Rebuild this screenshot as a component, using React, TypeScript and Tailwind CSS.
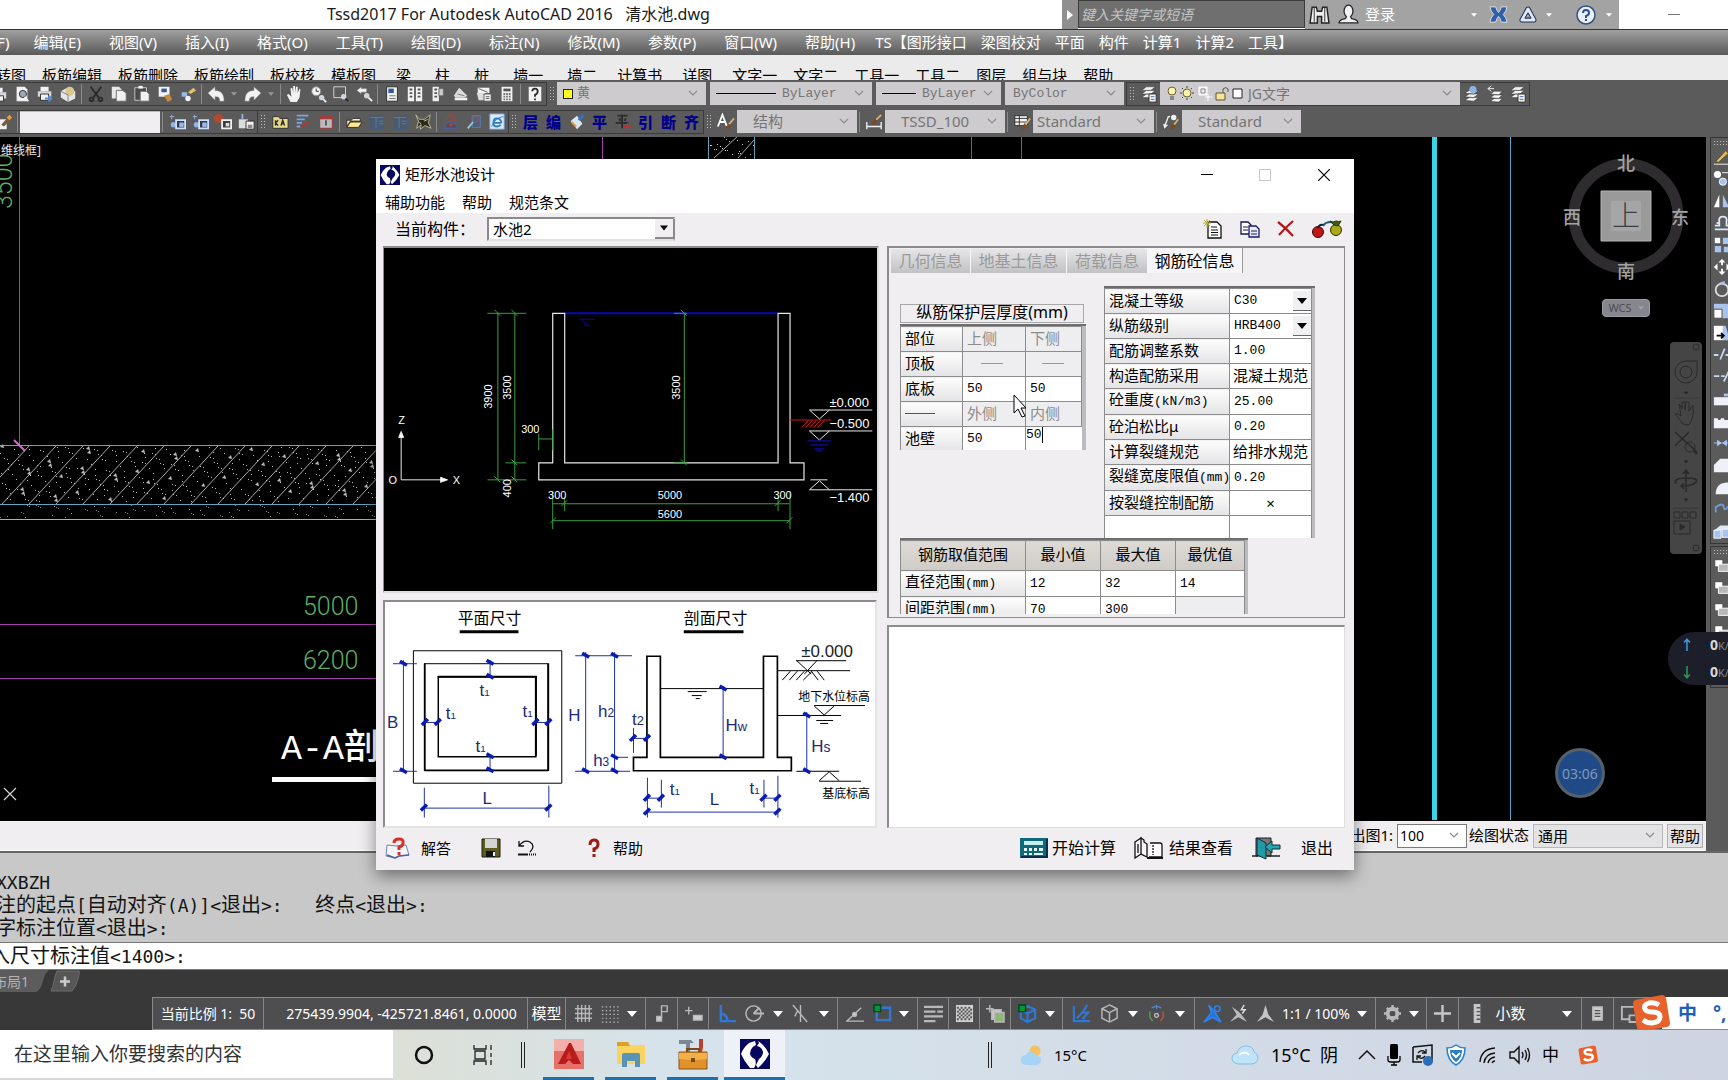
import React from 'react';

/* ---------- shared data ---------- */

const MENU_MAIN = ['编辑(E)', '视图(V)', '插入(I)', '格式(O)', '工具(T)', '绘图(D)', '标注(N)', '修改(M)', '参数(P)', '窗口(W)', '帮助(H)'];
const MENU_TS = ['TS【图形接口', '梁图校对', '平面', '构件', '计算1', '计算2', '工具】'];

const TSSD_GROUPS = [
    { gap: 'gap-4', items: ['转图', '板筋编辑', '板筋删除', '板筋绘制', '板校核', '模板图'] },
    { gap: 'gap-6', items: ['梁', '柱', '桩', '墙一', '墙二'] },
    { gap: 'gap-5', items: ['计算书', '详图', '文字一'] },
    { gap: 'gap-4', items: ['文字二', '工具一', '工具二', '图层', '组与块', '帮助'] },
];

const REBAR_ROWS = [
    { label: '混凝土等级', value: 'C30', kind: 'select' },
    { label: '纵筋级别', value: 'HRB400', kind: 'select' },
    { label: '配筋调整系数', value: '1.00', kind: 'input' },
    { label: '构造配筋采用', value: '混凝土规范', kind: 'cjk' },
    { label: '砼重度(kN/m3)', value: '25.00', kind: 'input' },
    { label: '砼泊松比μ', value: '0.20', kind: 'input' },
    { label: '计算裂缝规范', value: '给排水规范', kind: 'cjk' },
    { label: '裂缝宽度限值(mm)', value: '0.20', kind: 'input' },
    { label: '按裂缝控制配筋', value: '×', kind: 'mark' },
];

/* ---------- icons ---------- */

const W = '#f2f2f2';
const B = '#8fb4e6';
const D = '#2a2a2a';

const ICONS: Record<string, React.ReactNode> = {
    printer: <><path d="M5 8V3h9v5" fill={W} /><path d="M2 8h16v7H2z" fill="#d5d8de" /><path d="M5 12h10v6H5z" fill={W} stroke={D} strokeWidth="1" /></>,
    preview: <><path d="M4 2h9l3 3v13H4z" fill={W} /><circle cx="11" cy="10" r="4" fill="#9aa7b8" stroke={D} /><path d="m13 13 4 5" stroke={W} strokeWidth="2" /></>,
    plot: <><path d="M5 7V2h9v5" fill={W} /><path d="M2 7h15v6H2z" fill="#d5d8de" /><path d="M5 10h9v7H5z" fill={W} stroke={D} /><path d="M10 15h7m-3-3 3 3-3 3" stroke="#5c8fd6" strokeWidth="2" fill="none" /></>,
    box: <><path d="m2 7 7-4 9 4v8l-8 4-8-5z" fill="#e6e6e6" /><circle cx="12" cy="7" r="5" fill="#d9c78c" /><path d="m2 7 8 4v8" stroke="#777" fill="none" /></>,
    cut: <><path d="M4 2l9 12M16 2 7 14" stroke={D} strokeWidth="2" /><circle cx="5" cy="16" r="2" fill="none" stroke={D} strokeWidth="2" /><circle cx="15" cy="16" r="2" fill="none" stroke={D} strokeWidth="2" /></>,
    copy: <><path d="M2 2h8l3 3v10H2z" fill="#e8e8e8" /><path d="M7 6h7l4 3v9H7z" fill={W} stroke="#666" /></>,
    paste: <><path d="M2 3h13v14H2z" fill="#4a4a4a" stroke="#ccc" /><path d="M6 1h5v3H6z" fill={W} /><path d="M8 7h7l3 3v8H8z" fill={W} stroke="#666" /></>,
    match: <><path d="M3 2h12v11H3z" fill={W} /><path d="M6 4h6v4H6z" fill="#35599a" /><path d="m9 12 6-2 3 6-5 3z" fill="#c88a3c" /></>,
    brush: <><path d="M3 8h6v5H3z" fill="#9ab7e8" /><circle cx="10" cy="15" r="3" fill={W} /><path d="m10 8 6-5 3 3-6 4z" fill="#e2bf60" /></>,
    undo: <path d="M1 9l8-7v4c7 0 10 4 10 12h-5c0-4-1-5-5-5v4z" fill={W} stroke="#777" strokeWidth=".5" />,
    redo: <path d="M19 9l-8-7v4C4 6 1 10 1 18h5c0-4 1-5 5-5v4z" fill={W} stroke="#777" strokeWidth=".5" />,
    hand: <path d="M5 19 1 11l2-1 3 3-1-9 2-1 1 6V1h2v8l1-7h2v7l2-5 1 1-1 9-3 5z" fill={W} />,
    zoomrt: <><circle cx="8" cy="7" r="5" fill={W} stroke="#888" /><path d="M8 4v3h3" stroke={D} fill="none" /><circle cx="14" cy="14" r="3" fill="#cfd6df" /><path d="m16 16 3 3" stroke={W} strokeWidth="2" /></>,
    zoomwin: <><path d="M2 2h13v12H2z" fill="none" stroke="#ddd" /><circle cx="13" cy="13" r="3" fill="#cfd6df" /><path d="m15 15 3 3" stroke={D} strokeWidth="2" /></>,
    zoomprev: <><path d="m2 6 5-4v2h6v4H7v2z" fill={W} stroke="#666" strokeWidth=".5" /><circle cx="13" cy="12" r="3" fill="#cfd6df" /><path d="m15 14 4 4" stroke={W} strokeWidth="2" /></>,
    props: <><path d="M4 2h12v16H4z" fill={W} stroke={D} /><path d="M6 4h6v5H6z" fill="#35599a" /><path d="M7 12h7M7 15h7" stroke="#666" /></>,
    design: <><path d="M2 2h7v16H2zM11 2h7v16h-7z" fill={W} /><path d="M4 5h3M4 9h3M4 13h3M13 5h3M13 9h3M13 13h3" stroke="#555" strokeWidth="2" /></>,
    palettes: <><path d="M4 2h7v16H4z" fill={W} /><path d="M11 4h5v8h-5z" fill="#ccc" stroke="#666" /><path d="M6 5h3M6 9h3M6 13h3" stroke="#555" strokeWidth="2" /></>,
    sheet: <><path d="m2 12 6-9 9 9-3 2H4z" fill="#ddd" /><path d="M3 14h14v3H3z" fill={W} /><path d="m6 10 8 2" stroke="#777" /></>,
    markup: <><path d="M3 3h13v6H3z" fill={W} /><path d="M2 9h9v8H4z" fill="#ddd" /><path d="M10 10h8v8h-8z" fill={W} stroke="#555" /><path d="m4 4 10 4M12 13h4M12 15h4" stroke="#555" /></>,
    calc: <><path d="M4 2h12v16H4z" fill={W} /><path d="M6 4h8v3H6z" fill="#555" /><path d="M6 10h8M6 13h8M6 16h8" stroke="#777" strokeDasharray="2 1" strokeWidth="2" /></>,
    help: <><path d="M3 2h14v16H3z" fill={W} /><path d="M7 7q0-3 3-3t3 3-3 4v2M10 15v2" stroke={D} strokeWidth="2" fill="none" /></>,
    layerset: <><path d="m2 9 5-3h10l-5 4zM2 13l5-3h10l-5 4zM2 17l5-3h10l-5 4z" fill={W} stroke={D} strokeWidth=".5" /><circle cx="11" cy="5" r="4" fill={B} /></>,
    layerprev: <><path d="m5 10 4-3h9l-4 4zM5 14l4-3h9l-4 4zM5 18l4-3h9l-4 4z" fill={W} stroke={D} strokeWidth=".5" /><path d="m6 1-4 3 4 3M2 4h7" stroke={W} fill="none" /></>,
    layerdoc: <><path d="m2 6 5-4h10l-5 4zM2 10l5-4h10l-5 4zM2 14l5-4h6l-3 4z" fill={W} stroke={D} strokeWidth=".5" /><path d="M10 10h8v9h-8z" fill={W} stroke={D} /><path d="M12 13h4M12 16h4" stroke="#3b62a8" /></>,
    blockadd: <><circle cx="6" cy="13" r="3" fill={B} /><path d="M9 8h10v9H9z" fill="#3b3b3b" stroke="#cfe0ff" strokeWidth="2" /><path d="M13 11h4v4h-4zM4 2v5M2 4h5" stroke={B} fill="#9bbcf0" /></>,
    blockred: <><circle cx="5" cy="6" r="5" fill="#b5482c" /><path d="M9 8h10v9H9z" fill="#3b3b3b" stroke={W} strokeWidth="2" /><path d="M13 11h4v4h-4z" fill="#ddd" /></>,
    blocksave: <><path d="M2 7h10v10H2z" fill="#ddd" /><path d="M10 9h9v9h-9z" fill={W} stroke={D} /><path d="M12 13h5v4h-5z" fill="#888" /><path d="M6 1v6" stroke={B} strokeWidth="2" /></>,
    folderk: <><path d="M2 4h6l2 2h9v11H2z" fill="#e9d98d" stroke={D} /><path d="M5 8v6M5 11l3-3M5 11l3 3M11 14l2-6 2 6M11 12h4" stroke={D} fill="none" strokeWidth="1.5" /></>,
    textmark: <><path d="M3 3h13M3 7h9M3 11h6M3 15h4" stroke="#7fa5df" strokeWidth="2" /><path d="m8 16 9-6" stroke="#b33" strokeWidth="2" /></>,
    stamp: <><path d="M3 3h14v14H3z" fill="#bbb" stroke="#933" /><path d="M3 3h14v4H3z" fill="#a43c3c" /><path d="M10 8v6" stroke="#555" strokeWidth="2" /></>,
    open: <><path d="M2 8h5l2-2h8v3H6l-4 6z" fill="#fff3b0" stroke={D} /><path d="M6 10h13l-4 6H2z" fill="#ffe894" stroke={D} /></>,
    winblue: <><path d="M3 3h14v14H3z" fill="#4e5a68" stroke="#39618f" /><path d="M3 5h14M9 5v12M12 9h5M12 12h5" stroke="#4f82bd" /></>,
    cat: <path d="M2 2l4 5h6l6-5-2 9 3 6-7-3-5 4 1-5-5 4 2-8zM5 10l3 2M11 9l5-2" fill="#2b2b1d" stroke="#cbbf96" />,
    person: <><circle cx="10" cy="6" r="4" fill="none" stroke="#9a4444" strokeWidth="2" /><path d="M3 17q1-8 7-7t7 7z" fill="#5a4a55" stroke="#4c5f96" strokeWidth="1.5" /><path d="M8 13h4M10 11v4" stroke="#c44" /></>,
    wrench: <><path d="M8 3h9v13H8z" fill="#4f5f7a" stroke="#5c7fb8" /><circle cx="12" cy="7" r="3" fill="none" stroke="#b45252" /><path d="m9 10-6 7" stroke="#9cc" strokeWidth="2" /></>,
    ie: <><path d="M2 1h16v17H2z" fill="#dbe9f8" stroke="#6aa3da" /><path d="M15 11H6q0-5 4-5t5 5M6 11q0 4 4 4 3 0 4-2" fill="none" stroke="#2c7cc4" strokeWidth="2" /><path d="M4 15Q8 5 17 4" stroke="#2c7cc4" fill="none" strokeWidth="1" /></>,
    spray: <><path d="m3 9 7-6 6 9-6 6z" fill="#d9e6f5" /><path d="m12 8 5-6" stroke="#2f74c8" strokeWidth="3" /><path d="M4 10l5 5" stroke="#e8a030" strokeWidth="2" /></>,
    handtool: <><path d="M4 3h11M6 6l1 3M13 6l-1 3M2 11h14M9 3v14" stroke={D} strokeWidth="2" /><path d="M11 15h8M15 11v8" stroke="#b33" strokeWidth="1.5" /></>,
    textstyle: <><path d="M1 15 6 2l5 13M3 10h7" stroke="#fff" strokeWidth="2" fill="none" /><path d="m19 6-7 8" stroke="#d8b070" strokeWidth="2" /><path d="m9 16 4-4 3 2-3 4z" fill="#7a4a2a" /></>,
    dimstyle: <><path d="M2 10v8M18 10v8M2 15h16" stroke={W} strokeWidth="1.5" /><path d="m18 2-6 6" stroke="#d8b070" strokeWidth="2" /><path d="m7 12 4-6 3 3-3 4z" fill="#7a4a2a" /></>,
    tablestyle: <><path d="M2 3h14v11H2z" fill={W} stroke={D} /><path d="M2 6h14M2 10h14M7 3v11" stroke={D} /><path d="m9 17 4-6 3 3-3 4z" fill="#7a4a2a" /><path d="m19 6-5 7" stroke="#d8b070" strokeWidth="2" /></>,
    leader: <><path d="M9 4H7L3 15m-1-3 1 4 3-3" stroke={W} fill="none" strokeWidth="1.5" /><circle cx="13" cy="5" r="3" fill={W} /><path d="m18 7-6 8" stroke="#d8b070" strokeWidth="2" /><path d="m9 17 3-5 3 2-2 4z" fill="#7a4a2a" /></>,
    note: <><path d="M1 7h12v11H1z" fill={W} /><path d="m7 13 7-8 3 3-7 7z" fill="#7a5a3a" /><path d="m13 5 3-3 3 3-3 3z" fill="#e2a040" /></>,
};

const Ico: React.FC<{ name: string; className?: string }> = ({ name, className = 'size-[18px]' }) => (
    <svg viewBox="0 0 20 20" className={`${className} shrink-0`} fill="none" aria-hidden="true">{ICONS[name]}</svg>
);

const TssdLogo: React.FC<{ className: string }> = ({ className }) => (
    <svg viewBox="0 0 30 30" className={className} aria-hidden="true">
        <path d="M0 0h30v30H0z" fill="#06065c" />
        <path d="M15 2 9 4Q3 9 1 15q3 7 9 14h4q3-4 1-9-5-2-5-6 1-6 6-8z" fill="#fff" />
        <path d="M18 2q3 2 5 4 4 4 6 9-4 8-11 14l-2-3 3-6q4-3 4-7-1-5-6-6l2-3z" fill="#fff" />
    </svg>
);

const Down: React.FC<{ className?: string }> = ({ className = 'w-2.5 h-1.5 text-white' }) => (
    <svg viewBox="0 0 10 6" className={`${className} shrink-0`} aria-hidden="true"><path d="M0 0h10L5 6z" fill="currentColor" /></svg>
);

const Chevron = () => (
    <svg viewBox="0 0 10 6" className="absolute right-2 top-1/2 -mt-1 w-2.5 h-1.5 pointer-events-none" fill="none" aria-hidden="true">
        <path d="m1 1 4 4 4-4" stroke="#8c8c8c" strokeWidth="1.2" />
    </svg>
);

/* Half-width latin next to full-width hanzi, as the old bitmap face sets it */
const Mixed: React.FC<{ text: string }> = ({ text }) => (
    <>
        {text.split(/([\x21-\x7e]+)/).map((part, i) =>
            i % 2 ? <span key={i} className="font-['Liberation_Mono','Noto_Sans_CJK_SC',monospace] text-[13px]">{part}</span> : part
        )}
    </>
);

/* ---------- top bars ---------- */

const TitleBar = () => (
    <header className="h-[29px] flex items-stretch bg-white shrink-0">
        <h1 className="pl-[327px] text-base leading-[29px] text-[#1a1a1a] whitespace-pre">Tssd2017 For Autodesk AutoCAD 2016   清水池.dwg</h1>
        <div className="ml-auto flex items-stretch">
            <button className="w-4 bg-[#8f8f8f] flex items-center justify-center" aria-label="展开搜索">
                <svg viewBox="0 0 6 10" className="w-1.5 h-2.5"><path d="M0 0l6 5-6 5z" fill="#fff" /></svg>
            </button>
            <input aria-label="搜索帮助" placeholder="键入关键字或短语" className="w-[227px] h-[28px] px-0.5 bg-[#6f6f6f] border border-[#3c3c3c] text-[14px] italic text-white placeholder:text-[#c4c4c4] outline-none" />
            <div className="w-[314px] flex items-center bg-[#a3a3a3] text-white">
                <svg viewBox="0 0 20 20" className="ml-1 size-[21px]"><path d="M3 3h4l1 4h4l1-4h4l2 15h-7v-6H8v6H1z" fill="#eee" stroke="#222" strokeWidth="1.4" /><path d="M5 3v14M15 3v14" stroke="#444" /></svg>
                <button className="ml-2 flex items-center gap-1.5 text-[15px]">
                    <svg viewBox="0 0 20 20" className="size-[21px]"><path d="M1 18q0-3 6-4l1-2Q5 9 6 5q1-4 4-4t4 4q1 4-2 7l1 2q6 1 6 4z" fill="#eef0f4" stroke="#222" strokeWidth="1.2" /></svg>
                    登录
                </button>
                <Down className="ml-[76px] w-1.5 h-1 text-white" />
                <svg viewBox="0 0 20 20" className="ml-3 size-[19px]"><path d="M1 2h6q1 4 3 6 2-2 3-6h6q-1 5-4 8 3 3 4 8h-6q-1-4-3-6-2 2-3 6H1q1-5 4-8-3-3-4-8z" fill="#2f5fa8" stroke="#fff" strokeWidth=".7" /></svg>
                <svg viewBox="0 0 20 20" className="ml-2.5 size-5" fill="none"><path d="M10 4 4 15h12z" stroke="#1f2f52" strokeWidth="5" strokeLinejoin="round" /><path d="M10 4 4 15h12z" stroke="#dfe8f7" strokeWidth="3" strokeLinejoin="round" /><path d="m10 8-3 5h6z" fill="#a3a3a3" stroke="#26365c" /></svg>
                <Down className="ml-2 w-1.5 h-1 text-white" />
                <svg viewBox="0 0 20 20" className="ml-6 size-5" fill="none"><circle cx="10" cy="10" r="9" fill="#e9effb" stroke="#34507f" strokeWidth="1.5" /><path d="M7 8q0-3 3-3t3 3q0 2-3 3v2M10 14v2" stroke="#27508f" strokeWidth="2" /></svg>
                <Down className="ml-2.5 w-1.5 h-1 text-white" />
            </div>
            <button className="w-[109px] flex items-center justify-center bg-white" aria-label="最小化"><span className="w-3 h-px bg-[#777]" /></button>
        </div>
    </header>
);

const MenuBar = () => (
    <nav className="h-[26px] shrink-0 flex items-center border-t border-[#333] bg-linear-to-b from-[#a0a0a0] to-[#5a5a5a] text-[15px] text-white whitespace-nowrap overflow-hidden">
        <button className="-ml-[3px]">F)</button>
        <div className="flex ml-6 gap-7">
            {MENU_MAIN.map((m) => <button key={m}>{m}</button>)}
        </div>
        <div className="flex ml-5 gap-3.5">
            {MENU_TS.map((m) => <button key={m}>{m}</button>)}
        </div>
    </nav>
);

const TssdBar = () => (
    <nav className="h-[25px] shrink-0 pt-3 bg-[#ebebeb] text-[15px] leading-4 text-black whitespace-nowrap overflow-hidden flex">
        {TSSD_GROUPS.map((g, i) => (
            <div key={i} className={`flex ${g.gap} ${i === 0 ? '-ml-1' : i === 3 ? 'ml-4' : 'ml-5'}`}>
                {g.items.map((t) => <button key={t} className="h-4">{t}</button>)}
            </div>
        ))}
    </nav>
);

const Sep = () => <span className="w-px h-5 mx-0.5 bg-[#8a8a8a] shrink-0" />;
const Grip = () => <span className="w-1.5 h-4 mx-0.5 shrink-0 bg-[radial-gradient(#c0c0c0_1px,transparent_1px)] bg-size-[3px_3px]" />;

const Icons: React.FC<{ names: string[] }> = ({ names }) => (
    <>
        {names.map((n, i) => (
            <button key={i} className="w-[23px] h-5 flex items-center justify-center shrink-0" aria-label={n}><Ico name={n} /></button>
        ))}
    </>
);

const BarSelect: React.FC<{ label: string; value: string; className: string; children?: React.ReactNode }> = ({ label, value, className, children }) => (
    <div className={`relative h-[23px] flex items-center bg-[#cdcbcd] shrink-0 ${className}`}>
        {children}
        <select aria-label={label} className="flex-1 min-w-0 h-full bg-transparent appearance-none outline-none text-[#757575]"><option>{value}</option></select>
        <Chevron />
    </div>
);

const ToolbarRows = () => (
    <div className="h-[57px] shrink-0 bg-[#5b5b5b] overflow-hidden">
        <div className="h-[27px] flex items-center">
            <div className="flex items-center h-6 border border-[#3a3a3a] border-l-0 -ml-[13px]">
                <Icons names={['printer', 'preview', 'plot', 'box']} /><Sep />
                <Icons names={['cut', 'copy', 'paste', 'match', 'brush']} /><Sep />
                <Icons names={['undo']} /><Down className="mx-1 w-1.5 h-1 text-[#999]" />
                <Icons names={['redo']} /><Down className="mx-1 w-1.5 h-1 text-[#999]" /><Sep />
                <Icons names={['hand', 'zoomrt', 'zoomwin', 'zoomprev']} /><Sep />
                <Icons names={['props', 'design', 'palettes', 'sheet', 'markup', 'calc']} /><Sep />
                <Icons names={['help']} />
            </div>
            <div className="flex items-center gap-1 text-[13px] font-['Liberation_Mono','Noto_Sans_CJK_SC',monospace]">
                <div className="flex items-center">
                    <Grip />
                    <BarSelect label="颜色" value="黄" className="w-[149px] pl-1.5 gap-1"><span className="size-2.5 border border-[#222] bg-[#ffff20]" /></BarSelect>
                </div>
                <BarSelect label="线型" value="ByLayer" className="w-[162px] pl-1.5 gap-1.5"><span className="w-[60px] h-px bg-black" /></BarSelect>
                <BarSelect label="线宽" value="ByLayer" className="w-[125px] pl-1.5 gap-1.5"><span className="w-[34px] h-px bg-black" /></BarSelect>
                <BarSelect label="打印样式" value="ByColor" className="w-[119px] pl-2" />
            </div>
            <div className="flex items-center h-6 ml-0.5 border border-[#3a3a3a]">
                <Grip />
                <Icons names={['layerdoc']} />
                <BarSelect label="图层" value="JG文字" className="w-[300px] pl-1.5 gap-1 text-[14px]">
                    <svg viewBox="0 0 78 20" className="w-[78px] h-5 shrink-0" fill="none">
                        <circle cx="6" cy="7" r="4" fill="#fbf3a8" stroke="#6c6232" /><path d="M4 12h4v4H4z" fill="#888" />
                        <circle cx="21" cy="9" r="4" fill="#fbf3a8" stroke="#6c6232" /><path d="M21 2v2M21 14v2M14 9h2M26 9h2M16 4l1 1M25 13l1 1M26 4l-1 1M17 13l-1 1" stroke="#444" />
                        <path d="M33 3h8v8h-8z" fill="#eee" stroke="#fff" /><path d="M35 5h4v4h-4z" stroke="#888" /><path d="M39 13h7M42 10v7" stroke="#fff" />
                        <path d="M50 9h9v7h-9z" fill="#f4e6a0" stroke="#5d5228" /><path d="M57 9V5q3-3 5 0v3" stroke="#555" /><path d="M67 5h9v9h-9z" fill="#fff" stroke="#222" />
                    </svg>
                </BarSelect>
                <Icons names={['layerset', 'layerprev', 'layerdoc']} />
            </div>
        </div>
        <div className="h-[29px] flex items-center">
            <div className="flex items-center h-6 border border-[#3a3a3a] border-l-0 -ml-2">
                <Icons names={['note']} /><Sep />
                <input aria-label="块名称" className="w-[140px] h-[22px] bg-[#f0eef0] border-t border-[#bbb] outline-none" /><Sep />
                <Icons names={['blockadd', 'blockadd', 'blockred', 'blocksave']} />
            </div>
            <div className="flex items-center h-6 border border-[#3a3a3a] border-l-0">
                <Grip />
                <Icons names={['folderk', 'textmark', 'stamp']} /><Sep />
                <Icons names={['open', 'winblue', 'winblue', 'cat']} /><Sep />
                <Icons names={['person', 'wrench', 'ie']} />
            </div>
            <div className="flex items-center h-6 border border-[#3a3a3a] border-l-0 text-[#00008c] text-[15px] font-black">
                <Grip />
                {['层', '编'].map((t) => <button key={t} className="w-[23px] leading-5">{t}</button>)}
                <Icons names={['spray']} />
                <button className="w-[23px] leading-5">平</button>
                <Icons names={['handtool']} />
                {['引', '断', '齐'].map((t) => <button key={t} className="w-[23px] leading-5">{t}</button>)}
            </div>
            <div className="flex items-center text-[15px]">
                <Grip />
                <Icons names={['textstyle']} />
                <BarSelect label="文字样式" value="结构" className="w-[120px] pl-4" />
                <Sep /><Icons names={['dimstyle']} />
                <BarSelect label="标注样式" value="TSSD_100" className="w-[120px] pl-4" />
                <Sep /><Icons names={['tablestyle']} />
                <BarSelect label="表格样式" value="Standard" className="w-[121px] pl-1" />
                <Sep /><Icons names={['leader']} />
                <BarSelect label="引线样式" value="Standard" className="w-[119px] pl-4" />
            </div>
        </div>
    </div>
);

/* ---------- drawing area ---------- */

const speckles = Array.from({ length: 420 }, (_, i) => ({
    x: (i * 73 + (i % 7) * 31) % 376,
    y: 311 + ((i * 37 + (i % 11) * 5) % 55),
    big: i % 9 === 0,
}));

const ModelSpace = () => (
    <svg width="1706" height="683" viewBox="0 1 1706 683" className="absolute left-0 top-0" fill="none" aria-label="模型空间">
        <g stroke="#a83fb0">
            <path d="M19.5 0v309M0 309.5h28M0 488.5h376M0 542.5h376M602.5 0v40M971.5 0v40M1021.5 0v40" />
            <path d="m14 304 11 11" stroke="#e060e8" strokeWidth="2" />
        </g>
        <g stroke="#a8a8a8">
            {Array.from({ length: 16 }, (_, i) => <path key={i} d={`M${-25 + i * 27} 368l54-58`} />)}
            <path d="m714 22 24-22M738 22l16-18" />
        </g>
        {speckles.map((s, i) => <path key={i} d={s.big ? `M${s.x} ${s.y}l3-3 1 4z` : `M${s.x} ${s.y}h1v1h-1z`} fill="#bdbdbd" />)}
        {speckles.slice(0, 90).map((s, i) => <path key={i} d={`M${s.x} ${369 + (s.y % 13)}h1v1h-1z`} fill="#8a8a8a" />)}
        {speckles.slice(0, 24).map((s, i) => <path key={i} d={`M${710 + (s.x % 44)} ${(s.y * 3) % 22}h1v1h-1z`} fill="#ccc" />)}
        <g stroke="#62a5c4"><path d="M0 309.5h376M0 368.5h376M708.5 0v40M754.5 0v40" /><path d="M0 383.5h376" stroke="#8fb7e0" /></g>
        <path d="M1434.5 0v684" stroke="#3bd3e5" strokeWidth="5" />
        <path d="M1510.5 0v684" stroke="#58a4cc" />
        <g fill="#5fae63" className="font-['Roboto',sans-serif] text-[25px] font-light">
            <text x="303" y="479">5000</text>
            <text x="303" y="533">6200</text>
            <text transform="translate(12 73) rotate(-90)">3500</text>
        </g>
        <text x="1" y="19" fill="#e8e8e8" className="text-[12px]">维线框]</text>
        <text x="281" y="623" fill="#fff" className="font-['Liberation_Mono','Noto_Sans_CJK_SC',monospace] text-[35px] font-medium">A-A剖</text>
        <path d="M272 643.5h104" stroke="#fff" strokeWidth="5" />
        <path d="m4 652 12 12M16 652 4 664" stroke="#d0d0d0" strokeWidth="1.3" />
    </svg>
);

const ViewCube = () => (
    <div className="absolute right-[16px] top-[16px] w-[128px]">
        <svg viewBox="0 0 128 128" className="w-full" fill="none">
            <circle cx="64" cy="63" r="52" stroke="#2e2c2e" strokeWidth="11" />
            <path d="M39 38h50v50H39z" fill="#9a9a9a" stroke="#b4b4b4" /><path d="M49 48h30v30H49z" fill="#a6a6a8" />
            <g fill="#a2a2a2" textAnchor="middle" className="text-[18px] font-medium">
                <text x="64" y="17">北</text><text x="64" y="125">南</text><text x="10" y="71">西</text><text x="118" y="71">东</text>
            </g>
            <text x="64" y="73" textAnchor="middle" fill="#3c3c44" className="text-[28px] font-light">上</text>
        </svg>
        <button className="mt-[18px] mx-auto w-12 h-[18px] rounded bg-[#86868e] border border-[#9c9ca4] text-[11px] leading-4 text-[#4c4c54] flex items-center justify-center gap-1.5">WCS<Down className="w-1.5 h-1 text-[#a0a0a8]" /></button>
    </div>
);

const NavBar = () => (
    <div className="absolute right-1 top-[205px] w-8 h-[212px] rounded bg-[#454545]">
        <svg viewBox="0 0 32 212" className="w-full h-full" fill="none" stroke="#2a2a2a">
            <circle cx="26" cy="5" r="3" /><circle cx="26" cy="206" r="3" />
            <circle cx="16" cy="30" r="6" /><path d="M16 19h11v11a11 11 0 1 1-11-11z" /><path d="M3 56h26M3 166h26" stroke="#383838" />
            <path d="M13 82q-3-4-8-10 3-1 6 2L9 62l3 5V60h3v8l1-8h3v9l4-6q1 8-1 14l-3 6z" />
            <path d="m5 90 22 20M19 90 5 104" strokeWidth="1.5" /><circle cx="20" cy="105" r="5" /><path d="m24 109 3 3" strokeWidth="2" />
            <path d="M16 128v22M13 132l3-4 3 4M6 142q-3-6 10-6t10 4-14 4m2-3-3 3 3 3" strokeWidth="1.5" />
            <path d="M4 170h6v6H4zM12 170h6v6h-6zM20 170h6v6h-6zM4 179h16v13H4z" /><path d="m10 182 5 3-5 3z" fill="#2a2a2a" />
            <path d="M14 50h4l-2 2zM14 119h4l-2 2zM14 157h4l-2 2z" fill="#222" />
        </svg>
    </div>
);

const SIDE: React.ReactNode[] = [
    <><path d="m3 15 11-12 3 3L6 16z" fill="#e3b95c" stroke="#553" /><path d="M1 18h16" stroke="#fff" /></>,
    <><circle cx="5" cy="5" r="4" fill="#fff" /><circle cx="11" cy="13" r="4" fill="#a9c3ec" stroke="#fff" /><path d="M10 3h8v6" stroke="#fff" /></>,
    <><path d="M7 3v14H1z" fill="#fff" /><path d="M11 3v14h7z" fill="#a9c3ec" /></>,
    <path d="M2 13h5V8q-1-5 4-5t4 5v5h4M2 17h18M4 10h2" stroke="#dce6f5" strokeWidth="2" />,
    <><path d="M2 2h6v6H2z" fill="#fff" /><path d="M11 2h8v7h-8zM2 11h7v7H2zM12 12h8v6h-8z" fill="#a9c3ec" /></>,
    <path d="M10 1l4 4h-3v3H9V5H6zM10 19l4-4h-3v-3H9v3H6zM1 10l4-4v8zM19 10l-4-4v8z" fill="#fff" />,
    <><circle cx="10" cy="11" r="7" stroke="#ddd" strokeWidth="2" /><path d="M7 3l6-2v5z" fill="#a9c3ec" /></>,
    <><path d="M1 2h18v16H1z" fill="#a9c3ec" /><path d="M1 8h9v10H1z" fill="#fff" stroke="#444" /></>,
    <><path d="M1 2h10v16H1z" fill="#fff" /><path d="M11 2h3l5 16h-8z" fill="#a9c3ec" /><path d="M4 13h8m-3-3 3 3-3 3" stroke="#000" strokeWidth="2" /></>,
    <path d="M1 10h5M8 15l5-12M14 10h5" stroke="#c6d6ee" strokeWidth="2" />,
    <path d="M1 9h6M9 9h4M12 15l6-12" stroke="#c6d6ee" strokeWidth="2" />,
    <><path d="M1 8h20v9H1z" fill="#eef2f8" /><path d="M12 4h8v3h-8z" fill="#a9c3ec" /></>,
    <path d="M1 7h4l1 2h2l1-2h3l1 2h6v9H1z" fill="#eef2f8" />,
    <path d="M1 10h18M5 7l4 3-4 3zM15 7l-4 3 4 3z" stroke="#a9c3ec" fill="#a9c3ec" />,
    <path d="M1 18v-8l7-7h12v15z" fill="#eef2f8" />,
    <path d="M3 18q0-12 12-13h5v13z" fill="#eef2f8" />,
    <path d="M3 14V8q8-6 9 0t7-4" stroke="#6d9ad8" strokeWidth="2" />,
    <><path d="m2 9 6-5h12l-5 5z" fill="#dfe8f6" /><path d="M1 9h8v9H1zM10 8h9v9h-9z" fill="#a9c3ec" stroke="#fff" /></>,
];

const SideBar = () => (
    <aside className="w-[22px] shrink-0 bg-[#5b5b5b] pl-1 overflow-hidden">
        <div className="w-7 pl-0.5 border border-[#353535] flex flex-col items-start pb-px">
            <span className="w-6 h-1.5 mt-0.5 bg-[radial-gradient(#c0c0c0_1px,transparent_1px)] bg-size-[3px_3px]" />
            {SIDE.map((s, i) => <button key={i} aria-label={`修改工具 ${i + 1}`} className="h-[22px] flex items-center"><svg viewBox="0 0 20 20" className="size-[18px]" fill="none">{s}</svg></button>)}
        </div>
        <div className="w-7 pl-0.5 mt-0.5 border border-[#353535] flex flex-col items-start">
            <span className="w-6 h-1.5 mt-0.5 bg-[radial-gradient(#c0c0c0_1px,transparent_1px)] bg-size-[3px_3px]" />
            {[0, 1, 2, 3, 4, 5].map((i) => (
                <button key={i} aria-label={`绘图次序 ${i + 1}`} className="h-[22px] flex items-center">
                    <svg viewBox="0 0 20 20" className="size-[18px]" fill="none"><path d="M2 3h9v8H2z" fill="#fff" stroke="#444" /><path d="M6 8h11v8H6z" fill="#b8b8bc" stroke="#fff" /></svg>
                </button>
            ))}
        </div>
    </aside>
);

const ScaleBar = () => (
    <div className="h-[30px] shrink-0 bg-[#f0eef1] flex items-center justify-end pr-[3px] border-b border-white text-[15px] text-black">
        <label htmlFor="scale" className="mr-1">出图1:</label>
        <div className="relative">
            <select id="scale" className="w-[70px] h-6 pl-0.5 appearance-none bg-white border border-[#7a7a7a] text-[14px] leading-5"><option>100</option></select>
            <Chevron />
        </div>
        <label htmlFor="state" className="ml-0.5 mr-1">绘图状态</label>
        <div className="relative">
            <select id="state" className="w-[130px] h-6 pl-1 appearance-none bg-[#e3e2e4] border border-[#b8b8b8] text-[15px] leading-5"><option>通用</option></select>
            <Chevron />
        </div>
        <button className="ml-1 w-9 h-6 bg-[#e3e2e4] border border-[#b0b0b0] leading-5">帮助</button>
    </div>
);

/* ---------- pool dialog ---------- */

const PoolSection = () => (
    <svg viewBox="8 98 493 344" className="block w-full h-full" fill="none" stroke="#e8e8e8">
        <path d="M188 163.5h214" stroke="#0808b8" strokeWidth="2" />
        <path d="M203 169.5h16M208 175.5h6M205 170l6 5" stroke="#0808a0" />
        <path d="M176.5 312V163.5h12V313.5h214V163.5h12V313.5h14v17H162.5v-17h14z" strokeWidth="1.2" />
        <g stroke="#39a03c">
            <path d="M111 163.5h39M129 313.5h21M111 330.5h39M121.5 163v168M138.5 163v168" />
            <path d="M298 163.5h13M298 313.5h13M308.5 163v150" />
            <path d="M162.5 284v17M176.5 280v21M162 289.5h14" />
            <path d="M176 354.5h238M176 371.5h238M176.5 342v38M188.5 348v14M402.5 348v14M414.5 342v38" />
            <path d="m118 160 6 6M135 160l6 6M135 310l6 6M118 327l6 6M135 327l6 6M305 160l6 6M305 310l6 6M185 357l6-6M399 357l6-6M411 374l6-6M174 374l6-6" />
        </g>
        <path d="M24.5 286v44.5H70" /><path d="m22 288 2.5-6 2.5 6zM64 328l7 2.5-7 2.5z" fill="#fff" />
        <path d="M414 270.5h42M426 278l7-7M430 278l7-7M434 278l7-7M438 278l7-7M442 278l7-7" stroke="#d01818" />
        <path d="M434 260.5h63M434 260.5l10 9 10-9M434 281.5h63M434 281.5l10 9 10-9M434 340.5h63M434 340.5l10-9 10 9M435 330.5h17" />
        <path d="M432 291.5h24M435 295.5h18M439 299.5h10M441 301.5h6" stroke="#1010c8" />
        <g fill="#fff" stroke="none" className="font-['Liberation_Sans',sans-serif] text-[11px]" textAnchor="middle">
            <text x="154" y="284">300</text><text x="181" y="350">300</text><text x="294" y="350">5000</text><text x="407" y="350">300</text><text x="294" y="369">5600</text>
            <text transform="translate(116 247) rotate(-90)">3900</text>
            <text transform="translate(135 238) rotate(-90)">3500</text>
            <text transform="translate(304 238) rotate(-90)">3500</text>
            <text transform="translate(135 339) rotate(-90)">400</text>
            <text x="25" y="275">Z</text><text x="16" y="335">O</text><text x="80" y="335">X</text>
        </g>
        <g fill="#fff" stroke="none" className="font-['Liberation_Sans',sans-serif] text-[13px]">
            <text x="454" y="257">±0.000</text><text x="454" y="279">−0.500</text><text x="454" y="353">−1.400</text>
        </g>
    </svg>
);

const TICKS = [
    [27, 73], [27, 181], [114, 72], [114, 86], [114, 166], [114, 180], [210, 65], [210, 181], [239, 65], [239, 167], [239, 181], [348, 98], [348, 167], [432, 125], [432, 181],
];
const TICKS_UP = [
    [49, 132], [62, 132], [160, 132], [173, 132], [48, 218], [173, 218], [258, 148], [272, 148], [272, 208], [286, 208], [389, 208], [403, 208], [272, 222], [403, 222],
];

const SizeLegend = () => (
    <svg viewBox="9 12 492 224" className="block w-full h-full bg-white" fill="none" stroke="#000">
        <path d="M37.5 60.5h149v133h-149z" />
        <path d="M48.5 73.5h124v107.5h-124z" /><path d="M49 73v107.5h124V73" strokeWidth="1.7" />
        <path d="M62.5 86.5h98v80.5h-98z" strokeWidth="1.5" /><path d="M62 86.5h98.5V166" strokeWidth="2" />
        <path d="M258.500 181V167.5h13.5V66h13.5v101.5H389V66h14v101.5h14V181z" strokeWidth="1.7" />
        <path d="M84 41.5h59M309 41.5h60" strokeWidth="3" />
        <path d="M286 98.5h103M313 101.5h19M317 105.5h10M321 108.5h4" />
        <path d="M422 70.5h50M422 70l15 14M443 70l-13 14M403 80.5h73M408 90l8-9M415 90l8-9M422 90l8-9M429 90l9-9M437 81l7 9M443 81l7 9" />
        <path d="M440 115.5h51M440 116l10 9 10-9M403 125.5h64M442 130.5h17M446 133.5h8" />
        <path d="M422 181.5h43M445 191l10-9 10 9M445 191.5h42" />
        <g stroke="#1b2fa8">
            <path d="M17 73.5h24M17 181.5h24M27.5 70v112M114.5 70v17M114.5 166v16M48 132.5h14M160 132.5h13M48.5 198v30M173.5 196v32M48 218.5h125" />
            <path d="M200 65.5h57M200 181.5h55M240 167.5h13M210.5 62v120M239.5 62v120M258.5 138v25M258 148.5h14M348.5 96v72" />
            <path d="M272.5 188v40M286.5 190v28M389.5 190v28M403.5 186v42M272 208.5h14M389 208.5h14M272 222.5h131M432.5 122v60" />
        </g>
        <g stroke="#0b1cb0" strokeWidth="3.5">
            {TICKS.map(([x, y]) => <path key={`${x}-${y}`} d={`M${x - 3} ${y - 2}l7 4`} />)}
            {TICKS_UP.map(([x, y]) => <path key={`${x}-${y}`} d={`M${x - 3} ${y + 3}l6-6`} />)}
        </g>
        <g fill="#1e2a78" stroke="none" className="font-['Liberation_Sans',sans-serif] text-[17px]">
            <text x="11" y="138">B</text><text x="107" y="214">L</text><text x="193" y="131">H</text><text x="335" y="215">L</text>
            <text x="104" y="106">t<tspan fontSize="10">1</tspan></text><text x="70" y="129">t<tspan fontSize="10">1</tspan></text><text x="147" y="127">t<tspan fontSize="10">1</tspan></text><text x="100" y="162">t<tspan fontSize="10">1</tspan></text>
            <text x="223" y="127">h<tspan fontSize="12">2</tspan></text><text x="218" y="176">h<tspan fontSize="12">3</tspan></text><text x="257" y="135">t<tspan fontSize="13">2</tspan></text>
            <text x="351" y="141">H<tspan fontSize="13">w</tspan></text><text x="437" y="162">H<tspan fontSize="14">s</tspan></text>
            <text x="295" y="205">t<tspan fontSize="10">1</tspan></text><text x="375" y="204">t<tspan fontSize="10">1</tspan></text>
            <text x="427" y="67" fill="#222">±0.000</text>
        </g>
        <g fill="#000" stroke="none">
            <text x="82" y="34" className="text-[16px]">平面尺寸</text><text x="309" y="34" className="text-[16px]">剖面尺寸</text>
            <text x="424" y="111" className="text-[12px]">地下水位标高</text><text x="448" y="208" className="text-[12px]">基底标高</text>
        </g>
    </svg>
);

const labelCell = 'h-[25px] px-1 pb-0.5 border border-[#8c8c8c] bg-linear-to-b from-[#fdfdfd] to-[#e4e4e6] text-left font-normal whitespace-nowrap overflow-hidden';
const valueCell = 'h-[25px] px-1 border border-[#8c8c8c] bg-white overflow-hidden';
const mutedCell = 'h-[25px] px-1 pb-0.5 border border-[#8c8c8c] bg-[#eeedef] text-left font-normal text-[#8c8c8c]';
const cellInput = "block w-full bg-transparent outline-none text-[13px] font-['Liberation_Mono','Noto_Sans_CJK_SC',monospace]";

const CoverTable = () => (
    <div className="w-[186px] mt-[31px]">
        <div className="h-[19px] mr-0.5 border border-[#a8a8a8] text-base leading-[15px] text-center">纵筋保护层厚度(mm)</div>
        <div className="h-[126px] mt-px overflow-hidden bg-[#bcbcbe] border-t-2 border-[#6e6e6e] pr-[5px] text-[15px] leading-5">
            <table className="w-[181px] table-fixed border-collapse" aria-label="纵筋保护层厚度(mm)">
                <colgroup><col className="w-[62px]" /><col className="w-[63px]" /><col className="w-14" /></colgroup>
                <tbody>
                    <tr><th className={labelCell}>部位</th><th className={mutedCell}>上侧</th><th className={mutedCell}>下侧</th></tr>
                    <tr><th className={labelCell}>顶板</th><td className={mutedCell}><span className="block w-[22px] h-px ml-3.5 bg-[#999]" /></td><td className={mutedCell}><span className="block w-[22px] h-px ml-3 bg-[#999]" /></td></tr>
                    <tr><th className={labelCell}>底板</th><td className={valueCell}><input aria-label="底板上侧" defaultValue="50" className={cellInput} /></td><td className={valueCell}><input aria-label="底板下侧" defaultValue="50" className={cellInput} /></td></tr>
                    <tr><th className={labelCell}><span className="block w-[30px] h-px bg-[#555]" /></th><td className={mutedCell}>外侧</td><td className={mutedCell}>内侧</td></tr>
                    <tr><th className={labelCell}>池壁</th><td className={valueCell}><input aria-label="池壁外侧" defaultValue="50" className={cellInput} /></td>
                        <td className="h-[25px] bg-white align-top"><div className="flex items-center"><input aria-label="池壁内侧" defaultValue="50" size={2} className="w-4 bg-transparent outline-none text-[13px] leading-4 font-['Liberation_Mono',monospace]" /><span className="w-px h-4 bg-black" /></div></td></tr>
                </tbody>
            </table>
        </div>
    </div>
);

const RebarTable = () => (
    <div className="w-[211px] h-[252px] mt-[13px] ml-[18px] overflow-hidden bg-[#bcbcbe] border-t-2 border-[#6e6e6e] pr-1 text-[15px] leading-5">
        <table className="w-[207px] table-fixed border-collapse" aria-label="钢筋砼信息">
            <colgroup><col className="w-[125px]" /><col className="w-[82px]" /></colgroup>
            <tbody>
                {REBAR_ROWS.map((r) => (
                    <tr key={r.label}>
                        <th scope="row" className={labelCell}><Mixed text={r.label} /></th>
                        {r.kind === 'select' && (
                            <td className="h-[25px] pl-1 border border-[#8c8c8c] bg-white">
                                <div className="relative">
                                    <select aria-label={r.label} className={`${cellInput} appearance-none`}><option>{r.value}</option></select>
                                    <span className="absolute right-0 top-0 w-[18px] h-5 flex items-center justify-center bg-[#f0eff1] border-b border-[#666] pointer-events-none"><Down className="w-2.5 h-1.5 text-black" /></span>
                                </div>
                            </td>
                        )}
                        {r.kind === 'input' && <td className={valueCell}><input aria-label={r.label} defaultValue={r.value} className={cellInput} /></td>}
                        {r.kind === 'cjk' && <td className="h-[25px] pl-[3px] pb-0.5 border border-[#8c8c8c] bg-white whitespace-nowrap">{r.value}</td>}
                        {r.kind === 'mark' && <td className={`${valueCell} text-center`}>{r.value}</td>}
                    </tr>
                ))}
                <tr><td className="h-[23px] border border-[#8c8c8c] bg-white" /><td className="h-[23px] border border-[#8c8c8c] bg-white" /></tr>
            </tbody>
        </table>
    </div>
);

const RangeTable = () => (
    <div className="w-[348px] h-[76px] ml-[11px] overflow-hidden bg-[#bcbcbe] border-t-2 border-[#6e6e6e] pr-1 text-[15px] leading-5">
        <table className="w-[344px] table-fixed border-collapse" aria-label="钢筋取值范围">
            <colgroup><col className="w-[125px]" /><col className="w-[75px]" /><col className="w-[75px]" /><col className="w-[69px]" /></colgroup>
            <thead>
                <tr>{['钢筋取值范围', '最小值', '最大值', '最优值'].map((h) => <th key={h} className="h-[30px] pb-[3px] border border-[#8c8c8c] bg-linear-to-b from-[#dedbd6] to-[#cfccc8] font-normal">{h}</th>)}</tr>
            </thead>
            <tbody>
                <tr>
                    <th scope="row" className={labelCell}><Mixed text="直径范围(mm)" /></th>
                    {['12', '32', '14'].map((v) => <td key={v} className={valueCell}><input aria-label={`直径 ${v}`} defaultValue={v} className={cellInput} /></td>)}
                </tr>
                <tr>
                    <th scope="row" className={labelCell}><Mixed text="间距范围(mm)" /></th>
                    {['70', '300'].map((v) => <td key={v} className={valueCell}><input aria-label={`间距 ${v}`} defaultValue={v} className={cellInput} /></td>)}
                    <td className={mutedCell} />
                </tr>
            </tbody>
        </table>
    </div>
);

const PoolDialog = () => (
    <section role="dialog" aria-label="矩形水池设计" className="absolute left-[376px] top-[159px] z-20 w-[978px] bg-[#f0eef1] text-black shadow-[0_6px_16px_rgba(0,0,0,0.45)]">
        <div className="h-8 pl-1 pb-px flex items-center bg-white text-[15px]">
            <TssdLogo className="size-5" />
            <h2 className="ml-[5px]">矩形水池设计</h2>
            <div className="ml-auto flex">
                <button className="w-[58px] h-6 flex items-center justify-center" aria-label="最小化"><span className="w-3 h-px bg-black" /></button>
                <button className="w-[58px] h-6 flex items-center justify-center" aria-label="最大化"><span className="size-3 border border-[#c8c8c8]" /></button>
                <button className="w-[60px] h-6 flex items-center justify-center" aria-label="关闭"><svg viewBox="0 0 12 12" className="size-3"><path d="m0 0 12 12M12 0 0 12" stroke="#000" strokeWidth="1.2" /></svg></button>
            </div>
        </div>
        <div className="h-[22px] pl-[9px] flex items-center gap-[17px] bg-white text-[15px] leading-5">
            {['辅助功能', '帮助', '规范条文'].map((m) => <button key={m}>{m}</button>)}
        </div>
        <div className="h-[33px] pb-0.5 pl-[19px] pr-3 flex items-center text-base">
            <label htmlFor="member" className="w-[92px]">当前构件：</label>
            <div className="relative">
                <select id="member" className="w-[188px] h-6 pl-1 appearance-none bg-white border-2 border-[#8a8a8a] border-r-[#bdbdbd] border-b-[#e0e0e0] text-[15px] leading-5"><option>水池2</option></select>
                <span className="absolute right-0 top-0.5 w-5 h-5 flex items-center justify-center bg-[#f0eef1] border-r-2 border-b-2 border-[#8a8a8a] pointer-events-none"><Down className="w-2 h-1.5 text-black" /></span>
            </div>
            <div className="ml-auto flex items-center gap-[17px]">
                <button aria-label="新建"><svg viewBox="0 0 20 20" className="block size-5" fill="none"><path d="M5 3h9l4 4v12H5z" fill="#fff" stroke="#111" strokeWidth="1.3" /><path d="M8 8h6M8 11h7M8 13.5h7M8 16h7" stroke="#111" /><path d="M1 1l6 6M7 1 1 7M4 0v9M0 4h8" stroke="#b8b030" /></svg></button>
                <button aria-label="复制"><svg viewBox="0 0 20 20" className="block size-5" fill="none"><path d="M1 3h7l3 3v9H1z" fill="#fff" stroke="#14144e" strokeWidth="1.3" /><path d="M3 8h5M3 11h5" stroke="#14144e" /><path d="M9 7h7l3 3v8H9z" fill="#e8eefc" stroke="#1a1a70" strokeWidth="1.3" /><path d="M11 12h6M11 15h6" stroke="#1a1a70" /></svg></button>
                <button aria-label="删除"><svg viewBox="0 0 18 18" className="block size-[18px]"><path d="M1 2q8 6 15 14M16 1Q8 8 2 15" stroke="#b01818" strokeWidth="2.2" fill="none" /></svg></button>
                <button aria-label="换算"><svg viewBox="0 0 30 20" className="block w-[30px] h-5" fill="none"><circle cx="6" cy="13" r="5.5" fill="#c01818" stroke="#400" /><circle cx="24" cy="11" r="5.5" fill="#a8a818" stroke="#330" /><path d="M6 9q1-4 5-3" stroke="#123" strokeWidth="2" /><path d="M11 7q2-4 8-4" stroke="#1c5a78" strokeWidth="2" /><path d="M18 2q3 2 6 0 3 1 5 0l-3 5q-5 0-8-5z" fill="#4a5a14" stroke="#230" /></svg></button>
            </div>
        </div>
        <div className="pl-[7px] pr-[9px] grid grid-cols-[496px_1fr] gap-x-2">
            <div className="flex flex-col gap-[7px]">
                <div className="h-[347px] bg-black border-2 border-[#8c8c8c] border-l border-r-[#ddd] border-b-[#ddd]"><PoolSection /></div>
                <div className="h-[228px] mr-0.5 border-2 border-[#8c8c8c] border-r-[#e4e4e4] border-b-[#e4e4e4]"><SizeLegend /></div>
            </div>
            <div className="flex flex-col gap-[7px]">
                <div className="h-[372px] border-t-2 border-l-2 border-[#8c8c8c] border-r border-b">
                    <div role="tablist" className="h-[25px] pl-0.5 flex text-base leading-6 text-[#9a9a9a]">
                        <button role="tab" className="w-20 h-6 mt-px bg-linear-to-b from-[#e6e5e7] to-[#c2c2c4] border-r border-[#f6f6f6]">几何信息</button>
                        <button role="tab" className="w-24 h-6 mt-px bg-linear-to-b from-[#e6e5e7] to-[#c2c2c4] border-r border-[#f6f6f6]">地基土信息</button>
                        <button role="tab" className="w-20 h-6 mt-px bg-linear-to-b from-[#e6e5e7] to-[#c2c2c4]">荷载信息</button>
                        <button role="tab" aria-selected="true" className="w-24 h-[25px] bg-[#f6f5f7] text-black border-r border-[#9a9a9a]">钢筋砼信息</button>
                    </div>
                    <div className="flex pl-[11px]">
                        <CoverTable />
                        <RebarTable />
                    </div>
                    <RangeTable />
                </div>
                <div className="h-[203px] bg-white border-t-2 border-l-2 border-[#8c8c8c] border-r border-b border-r-[#ddd] border-b-[#ddd]" />
            </div>
        </div>
        <div className="h-[42px] pl-2 pr-[21px] pb-0.5 flex items-center text-[15px]">
            <button className="flex items-center gap-[11px]">
                <svg viewBox="0 0 26 22" className="w-[26px] h-[22px]" fill="none"><path d="m3 8 9 1 10-1 3 10-10 1-4 2-9-2z" fill="#f4f6fb" stroke="#7680b0" /><path d="m3 18 8 3 4-2 10-1" stroke="#55609c" strokeWidth="1.5" /><path d="M10 6q0-4 5-4t4 4q0 3-4 4v3M15 15v3" stroke="#d8302c" strokeWidth="3" /></svg>
                解答
            </button>
            <button className="ml-[30px]" aria-label="保存"><svg viewBox="0 0 20 20" className="block size-5"><path d="M1 1h18v18H1z" fill="#5c5c22" stroke="#1c1c08" /><path d="M4 1h12v9H4z" fill="#d4d4d4" /><path d="M5 13h9v6H5z" fill="#111" /><path d="M12 14h2v4h-2z" fill="#eee" /></svg></button>
            <button className="ml-4" aria-label="撤销"><svg viewBox="0 0 20 20" className="block size-5" fill="none"><path d="M2 8q5-7 11-4 6 4 0 10M2 3v5h5" stroke="#111" strokeWidth="1.3" /><path d="M1 16.5h10" stroke="#111" strokeWidth="2" /><path d="M12 16.5h7" stroke="#111" strokeWidth="2" strokeDasharray="1 1" /></svg></button>
            <button className="ml-[50px] flex items-center gap-3">
                <svg viewBox="0 0 14 20" className="w-3.5 h-5" fill="none"><path d="M3 7q0-5 4-5t4 4-4 5v3M7 16v3" stroke="#9c1c14" strokeWidth="3" /></svg>
                帮助
            </button>
            <div className="ml-auto flex items-center text-base">
                <button className="flex items-center gap-1">
                    <svg viewBox="0 0 28 20" className="w-7 h-5"><path d="M0 0h28v20H0z" fill="#0e6a78" /><path d="M1 19h26V1" fill="none" stroke="#06304a" strokeWidth="2" /><path d="M4 3h19v4H4z" fill="#c8eef0" /><path d="M4 10h3v3H4zM9 10h3v3H9zM14 10h3v3h-3zM19 10h4v3h-4zM4 15h3v2H4zM9 15h3v2H9zM14 15h9v2h-9z" fill="#e8ffff" /></svg>
                    开始计算
                </button>
                <button className="ml-[18px] flex items-center gap-[5px]">
                    <svg viewBox="0 0 30 24" className="w-[30px] h-6" fill="none" stroke="#111" strokeWidth="1.3"><path d="M1 6l6-4v16l-6 4zM7 2v16l6 3V8l-3-2V4z" fill="#f6f6f6" /><path d="M4 8v9" /><path d="M16 7h10q2 0 2 2v12H15" fill="#fff" /><path d="M13 22h16" strokeWidth="2" /><path d="M19 9v10" strokeDasharray="2 1" /></svg>
                    结果查看
                </button>
                <button className="ml-[18px] flex items-center gap-5">
                    <svg viewBox="0 0 30 24" className="w-[30px] h-6" fill="none"><path d="M5 2h15v18H5z" fill="#777" stroke="#222" /><path d="m6 2 9 5v16l-9-4z" fill="#1f9aa6" stroke="#0c3038" /><path d="M1 20h6M16 20h13" stroke="#222" strokeWidth="1.5" /><path d="m14 11 7-6v4h8v4h-8v4z" fill="#25a5b4" stroke="#0c3038" /></svg>
                    退出
                </button>
            </div>
        </div>
        <svg viewBox="0 0 14 24" className="absolute left-[637px] top-[235px] w-3.5 h-6 pointer-events-none" aria-hidden="true"><path d="M1 1v18l4-4 4 8 3-1-4-8h5z" fill="#fff" stroke="#000" /></svg>
    </section>
);

/* ---------- command line, status bar, taskbar ---------- */

const Cmd: React.FC<{ text: string; className: string }> = ({ text, className }) => (
    <p className={`whitespace-pre text-xl leading-[22px] ${className}`}>
        {text.split(/([\x20-\x7e]+)/).map((p, i) => (i % 2 ? <span key={i} className="font-['DejaVu_Sans_Mono',monospace] text-[18px]">{p}</span> : p))}
    </p>
);

const CommandLine = () => (
    <div className="shrink-0 bg-[#c8c8c8] text-[#141414] overflow-hidden border-t-2 border-[#666]">
        <div className="h-[89px] pt-[18px]">
            <Cmd text="XXBZH" className="-ml-1" />
            <Cmd text="注的起点[自动对齐(A)]<退出>:   终点<退出>:" className="-ml-1" />
            <Cmd text="字标注位置<退出>:" className="-ml-1" />
        </div>
        <div className="h-7 flex items-center bg-white border-y border-[#777]">
            <Cmd text="入尺寸标注值<1400>:" className="-ml-2.5" />
        </div>
    </div>
);

const SCell: React.FC<{ className: string; children?: React.ReactNode }> = ({ className, children }) => (
    <div className={`h-full flex items-center justify-evenly border-r border-[#858585] shrink-0 ${className}`}>{children}</div>
);

const S: React.FC<{ children: React.ReactNode }> = ({ children }) => (
    <svg viewBox="0 0 20 20" className="size-[19px] shrink-0" fill="none" stroke="#b8b8b8" strokeWidth="1.5">{children}</svg>
);

const StatusBar = () => (
    <div className="h-[60px] shrink-0 bg-[#383838] flex flex-col justify-between overflow-hidden">
        <div className="flex h-[25px] items-start text-[14px] text-[#b4b4b4]">
            <svg viewBox="0 0 80 24" className="w-20 h-6">
                <path d="M0 0h49q-4 2-6 11t-7 11H0z" fill="#5c5c5c" />
                <path d="M57 1h22q1 0-1 8t-6 12H51q2-4 3-10t3-10z" fill="#565656" stroke="#6c6c6c" />
                <path d="M60 11.5h10M65 6.5v10" stroke="#ccc" strokeWidth="2.5" />
                <text x="-7" y="17" fill="#b4b4b4">布局1</text>
            </svg>
        </div>
        <div className="relative h-[33px] ml-[152px] flex items-stretch bg-[#4e4e51] border-y border-l border-[#8a8a8a] text-[15px] text-white whitespace-nowrap">
            <SCell className="w-[111px]"><span className="whitespace-pre text-[14px]">当前比例 1:  50</span></SCell>
            <SCell className="w-[264px] pl-3 text-[14px]">275439.9904, -425721.8461, 0.0000</SCell>
            <SCell className="w-[38px]"><button>模型</button></SCell>
            <SCell className="w-20">
                <S><path d="M4 1v18M8 1v18M12 1v18M16 1v18M1 5h18M1 10h18M1 15h18" /></S>
                <S><path d="M1 3h18M1 7h18M1 11h18M1 15h18M1 19h18" strokeDasharray="1.5 2.5" strokeWidth="1.3" /></S><Down />
            </SCell>
            <SCell className="w-8"><S><path d="M10 15V2h6v6h-6" /><path d="M5 13h5v5H5z" fill="#ccc" /></S></SCell>
            <SCell className="w-[31px]"><S><path d="M5 3v8M1 7h8" /><path d="M10 12h9v5h-9z" fill="#ccc" /></S></SCell>
            <SCell className="w-[129px]">
                <S><path d="M3 1v17h16M3 10q7 1 7 8" stroke="#2f78d8" strokeWidth="2.5" /></S>
                <S><circle cx="9" cy="10" r="8" /><path d="M9 10h11M9 10l6-6" strokeWidth="2" /></S><Down />
                <S><path d="M2 1l15 18M10 1v18M4 13l3-6" /></S><Down />
            </SCell>
            <SCell className="w-20">
                <S><path d="M0 18h19M1 18 16 4" /><circle cx="9" cy="11" r="2" fill="#ccc" /></S>
                <S><path d="M4 4h14v13H4z" stroke="#2f78d8" strokeWidth="2.5" /><path d="M1 1h7v7H1z" fill="#093" stroke="#042" /></S><Down />
            </SCell>
            <SCell className="w-[31px]"><S><path d="M0 3h20M0 8h12M14 8h6M0 13h20M0 18h12" strokeWidth="2.5" /></S></SCell>
            <SCell className="w-[31px]"><S><path d="M1 1h18v18H1z" fill="#d0d0d0" stroke="none" /><path d="M2 4h16M2 8h16M2 12h16M2 16h16" stroke="#555" strokeWidth="2" strokeDasharray="2 2" /><path d="M4 6h14M4 10h14M4 14h14" stroke="#555" strokeWidth="2" strokeDasharray="2 2" /></S></SCell>
            <SCell className="w-[31px]"><S><path d="M4 1v8M0 5h8" /><path d="M6 6h10v10H6z" fill="#ccc" /><path d="M9 9h10v10H9z" fill="#8fb878" /></S></SCell>
            <SCell className="w-[52px]">
                <S><path d="m10 2 8 4v9l-8 4-7-4V6zM3 6l7 4 8-4M10 10v9" stroke="#2f78d8" strokeWidth="2.2" /><path d="M1 1h7v7H1z" fill="#093" stroke="#042" /></S><Down />
            </SCell>
            <SCell className="w-[132px]">
                <S><path d="M2 2v16h17M5 15l7-7M16 1l-5 8h6l-6 7" stroke="#2f78d8" strokeWidth="2.2" /></S>
                <S><path d="m10 1 8 4v10l-8 4-8-4V5zM2 5l8 4 8-4M10 9v10" /></S><Down />
                <S><path d="M3 8v6l3 4" stroke="#5a9a5a" /><path d="M17 8v6l-3 4" stroke="#c05040" /><path d="M5 4l5-2 5 2M10 1v4" stroke="#4c88d8" /><circle cx="10" cy="12" r="2" /></S><Down />
            </SCell>
            <SCell className="w-[181px]">
                <S><path d="M1 19 9 9 6 1l5 6 3 4 5 8-9-5z" fill="#2474dc" stroke="#2f86f0" /><circle cx="15" cy="5" r="3" stroke="#2f86f0" /></S>
                <S><path d="M1 19l7-8L3 3l7 5 3 3 6 8-9-5z" fill="#bbb" stroke="none" /><path d="M16 1l-3 5h4l-3 4" stroke="#ddd" /></S>
                <S><path d="m10 1 3 10 6 8-9-5-9 5 6-8z" fill="#c4c4c4" stroke="none" /></S>
                <span className="text-[14px]">1:1 / 100%</span><Down />
            </SCell>
            <SCell className="w-[51px]"><S><circle cx="10" cy="10" r="5" strokeWidth="4" /><path d="M10 1v18M1 10h4M15 10h4M4 4l3 3M16 4l-3 3M4 16l3-3M16 16l-3-3" strokeWidth="2.5" /><circle cx="10" cy="10" r="2" fill="#4e4e51" stroke="#4e4e51" /></S><Down /></SCell>
            <SCell className="w-8"><S><path d="M10 1v18M1 10h18" strokeWidth="2.5" stroke="#c8c8c8" /></S></SCell>
            <SCell className="w-[123px]"><S><path d="M6 0h7v20H6z" fill="#c8c8c8" stroke="none" /><path d="M9 4h4M9 8h4M9 12h4M9 16h4" stroke="#555" /></S><span className="mr-7">小数</span><Down /></SCell>
            <SCell className="w-8"><S><path d="M5 3h10v14H5z" fill="#ccc" /><path d="M7 7h6M7 10h6M7 13h6" stroke="#555" /></S></SCell>
            <SCell className="w-8"><S><path d="M19 3H2v13h8M10 12h8v7h-8z" strokeWidth="2" /></S></SCell>
            <div className="absolute right-0 -top-1 h-[38px] flex items-center">
                <div className="z-10 -mr-2 relative"><SogouLogo className="size-[38px]" /></div>
                <div className="w-[66px] h-8 pl-4 bg-white flex items-center gap-4 text-[19px] font-bold text-[#1b63b8] overflow-hidden"><button>中</button><span>°,</span></div>
            </div>
        </div>
    </div>
);

const SogouLogo: React.FC<{ className: string }> = ({ className }) => (
    <svg viewBox="0 0 38 38" className={className} fill="none" aria-label="搜狗输入法">
        <path d="M3 6 30 1q3 0 4 3l4 25q0 3-3 4L9 37q-3 0-4-3L1 10q0-3 2-4z" fill="#e8622c" />
        <path d="M27 11q-4-3-10-2-6 2-4 6 1 3 8 3t7 5q0 5-8 6-5 0-9-3" stroke="#fff" strokeWidth="5" />
    </svg>
);

const Taskbar = () => (
    <footer className="h-[50px] shrink-0 flex items-stretch bg-linear-to-r from-[#e4dcb8] via-[#d6e3ec] via-40% to-[#ced4e2] text-black">
        <input aria-label="搜索" placeholder="在这里输入你要搜索的内容" className="w-[393px] pl-3.5 bg-white border-b-2 border-[#d8d8d8] text-[19px] placeholder:text-[#333] outline-none" />
        <button className="w-[62px] flex items-center justify-center" aria-label="Cortana"><svg viewBox="0 0 20 20" className="size-5"><circle cx="10" cy="10" r="8" fill="none" stroke="#111" strokeWidth="2.5" /></svg></button>
        <button className="w-[58px] flex items-center justify-center" aria-label="任务视图"><svg viewBox="0 0 22 20" className="w-[22px] h-5" fill="none" stroke="#222" strokeWidth="1.3"><path d="M1 0v4h12V0M1 20v-4h12v4M2 6h10v8H2zM18 0v5M18 8v4M18 15v5" /></svg></button>
        <span className="w-1 h-[26px] self-center ml-2 border-x border-[#222]" />
        <div className="flex ml-[18px] gap-[11px]">
            <button className="w-[51px] flex items-center justify-center border-b-[3px] border-[#1f6fa8]" aria-label="AutoCAD">
                <svg viewBox="0 0 30 30" className="size-[30px]"><path d="M0 0h30v30H0z" fill="#f3b0aa" /><path d="M0 12h30v18H0z" fill="#e8706a" /><path d="M15 4 4 25h7l4-4 4 4h8L17 4z" fill="#b81c1c" /><path d="m15 12-3 8h6z" fill="#d83c36" /></svg>
            </button>
            <button className="w-[51px] flex items-center justify-center border-b-[3px] border-[#1f6fa8]" aria-label="文件资源管理器">
                <svg viewBox="0 0 28 26" className="w-7 h-[26px]"><path d="M0 1h11l2 3h15v19H0z" fill="#fbd35f" /><path d="M0 1h11l2 4H0z" fill="#d9a227" /><path d="M5 26V14q0-2 2-2h14q2 0 2 2v12h-5v-6h-8v6z" fill="#5794b8" /></svg>
            </button>
            <button className="w-[51px] flex items-center justify-center border-b-[3px] border-[#1f6fa8]" aria-label="工具箱">
                <svg viewBox="0 0 30 32" className="w-[30px] h-8"><path d="M1 2h12l3 3h-4v9H8V6H1z" fill="#7b8794" /><path d="M21 1h4v8l-1 5h-2l-1-5z" fill="#b8402c" /><path d="M9 11h12v4H9z" fill="none" stroke="#7a4a10" strokeWidth="2" /><path d="M1 14h28v17H1z" fill="#e0912c" stroke="#8a5416" /><path d="M1 15h28v6l-12 1h-4L1 21z" fill="#f3b04a" /><path d="M13 20h4v4h-4z" fill="#7a4a10" /></svg>
            </button>
        </div>
        <button className="w-[61px] ml-1.5 flex items-center justify-center bg-[#eef2f8] border-b-[3px] border-[#1f6fa8]" aria-label="TSSD"><TssdLogo className="size-[30px]" /></button>
        <div className="ml-auto flex items-center">
            <span className="w-1 h-[26px] border-x border-[#222]" />
            <button className="ml-7 flex items-center gap-2.5 text-[15px]">
                <svg viewBox="0 0 24 22" className="w-6 h-[22px]"><circle cx="15" cy="7" r="5.5" fill="#f3c260" /><path d="M6 21q-6-1-5-6 1-4 5-4 2-4 6-3 4 1 4 4 6 0 5 5-1 4-5 4z" fill="#a6d4f4" /></svg>
                15°C
            </button>
            <button className="ml-[144px] flex items-center gap-3 text-[18px] whitespace-pre">
                <svg viewBox="0 0 28 20" className="w-7 h-5"><path d="M7 19q-6-1-6-6 0-4 5-5 2-7 9-7t8 6q4 2 4 6 0 5-6 6z" fill="#bfe3f8" stroke="#86bde0" /><path d="M8 10q6-5 10 0" stroke="#fff" fill="none" strokeWidth="2" /></svg>
                15°C  阴
            </button>
            <div className="ml-5 mr-[130px] flex items-center gap-[11px]">
                <svg viewBox="0 0 18 20" className="w-[18px] h-5" fill="none"><path d="m1 14 8-8 8 8" stroke="#111" strokeWidth="1.5" /></svg>
                <svg viewBox="0 0 14 22" className="w-3.5 h-[22px]" fill="none"><rect x="3" y="0" width="8" height="15" rx="1.5" fill="#000" /><path d="M1 12v4q0 2 3 2h6q3 0 3-2v-4M7 18v3M4 21h6" stroke="#000" strokeWidth="1.3" /></svg>
                <svg viewBox="0 0 22 22" className="size-[22px]" fill="none"><path d="M1 3 20 1v17M1 3v15h9" stroke="#111" strokeWidth="1.5" /><path d="M6 9q3-4 7-1M14 5v4h-4M13 12q-3 4-7 1M5 16v-4h4" stroke="#111" strokeWidth="1.3" /><circle cx="16" cy="17" r="5" fill="#2d6cb8" /></svg>
                <svg viewBox="0 0 22 22" className="size-[22px]" fill="none"><path d="M11 1q4 3 9 3 0 12-9 17Q2 16 2 4q5 0 9-3z" fill="#fff" stroke="#2a7ec8" strokeWidth="1.5" /><path d="M5 6h12q0 8-6 12Q5 14 5 6z" fill="#2a7ec8" /><path d="m7 9 4 4 4-4" stroke="#fff" strokeWidth="2" /></svg>
                <svg viewBox="0 0 20 20" className="size-5" fill="none" stroke="#111" strokeWidth="1.4"><path d="M2 17Q3 4 17 3M6 18q1-9 11-10M10 18q1-5 7-6M14 18q1-2 3-2" /></svg>
                <svg viewBox="0 0 22 20" className="w-[22px] h-5" fill="none" stroke="#111" strokeWidth="1.4"><path d="M1 7h4l5-5v16l-5-5H1zM13 7q2 3 0 6M16 5q3 5 0 10M18.5 3q4 7 0 14" /></svg>
                <span className="text-[17px] leading-5">中</span>
                <span className="ml-2"><SogouLogo className="size-5" /></span>
            </div>
        </div>
    </footer>
);

export default function App() {
    return (
        <div className="relative h-screen flex flex-col overflow-hidden font-['Noto_Sans','Noto_Sans_CJK_SC',sans-serif]">
            <TitleBar />
            <MenuBar />
            <TssdBar />
            <ToolbarRows />
            <main className="flex-1 min-h-0 flex">
                <div className="flex-1 min-w-0 flex flex-col">
                    <div className="relative flex-1 bg-black overflow-hidden">
                        <ModelSpace />
                        <ViewCube />
                        <NavBar />
                        <div className="absolute right-[101px] bottom-[23px] size-[50px] rounded-full border-[3px] border-[#55606c] bg-[#1f4a86] text-[14px] text-[#8298b8] flex items-center justify-center">03:06</div>
                    </div>
                    <ScaleBar />
                </div>
                <SideBar />
            </main>
            <CommandLine />
            <StatusBar />
            <Taskbar />
            <PoolDialog />
            {/* network speed bubble docked at the right edge */}
            <div className="absolute right-0 top-[632px] z-10 w-[60px] h-[53px] rounded-l-full bg-[#1c1e2a] flex flex-col justify-center gap-1.5 overflow-hidden text-[14px] leading-5 font-bold text-[#d8d8d8]">
                {[{ c: 'text-[#4a98d0]', a: '↑' }, { c: 'text-[#2f9a52]', a: '↓' }].map((n) => (
                    <div key={n.a} className="pl-3 flex items-baseline gap-4 whitespace-nowrap"><span className={n.c}>{n.a}</span><span>0<small className="text-[11px] font-normal text-[#888]">K/s</small></span></div>
                ))}
            </div>
        </div>
    );
}
